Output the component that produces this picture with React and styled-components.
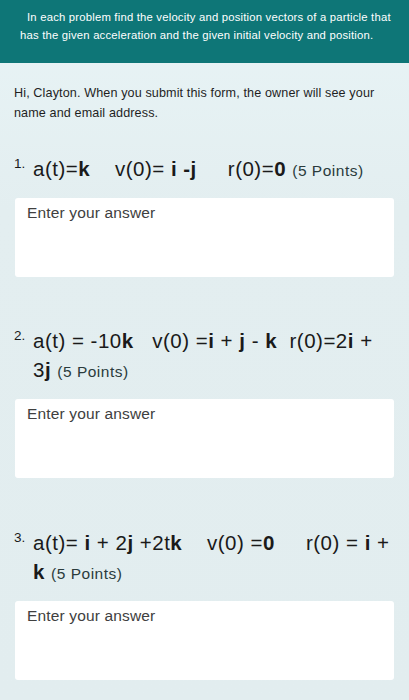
import styled, { createGlobalStyle } from 'styled-components'

const GlobalStyle = createGlobalStyle`
  html, body {
    margin: 0;
    padding: 0;
  }
  body {
    font-family: "Liberation Sans", Arial, sans-serif;
    background: #e3eef0;
  }
`

const Page = styled.div`
  width: 409px;
  min-height: 700px;
  overflow: hidden;
  background: linear-gradient(180deg, #e8f4f6 0%, #e3eef0 30%, #e2edef 100%);
`

const Banner = styled.header`
  background: #0e7677;
  color: #ffffff;
  font-size: 11.3px;
  letter-spacing: 0.2px;
  line-height: 18px;
  padding: 8px 8px 19px 20px;
  text-indent: 7px;
`

const Intro = styled.p`
  margin: 0;
  padding: 20px 10px 0 14px;
  font-size: 12.6px;
  letter-spacing: 0.12px;
  line-height: 20px;
  color: #1f1f1f;
`

const Question = styled.section`
  padding: 0 15px;
  margin-top: ${props => props.top || 38}px;
`

const Title = styled.div`
  display: flex;
  align-items: flex-start;
  color: #1a1a1a;
`

const Num = styled.span`
  flex: 0 0 19px;
  font-size: 13.5px;
  line-height: 18px;
  margin-top: 1px;
  margin-left: -1px;
`

const Prompt = styled.div`
  font-size: 20.5px;
  letter-spacing: 0.5px;
  line-height: 29px;

  b {
    font-weight: 700;
  }
`

const Points = styled.span`
  font-size: 15.5px;
  line-height: 1;
  letter-spacing: 0.5px;
  color: #2a3b3c;
`

const AnswerBox = styled.div`
  margin-top: 15px;
  height: 79px;
  background: #ffffff;
  border-radius: 3px;
  box-sizing: border-box;
  padding: 6px 12px;
  font-size: 15.5px;
  letter-spacing: 0.15px;
  line-height: 18px;
  color: #404040;
`

const questions = [
  {
    n: '1.',
    top: 31,
    body: (
      <>
        a(t)=<b>k</b>&nbsp;&nbsp;&nbsp; v(0)= <b>i -j</b>&nbsp;&nbsp;&nbsp;&nbsp; r(0)=<b>0</b>{' '}
        <Points>(5 Points)</Points>
      </>
    ),
  },
  {
    n: '2.',
    top: 49,
    body: (
      <>
        a(t) = -10<b>k</b>&nbsp;&nbsp; v(0) =<b>i</b> + <b>j</b> - <b>k</b>&nbsp; r(0)=2<b>i</b> + 3<b>j</b>{' '}
        <Points>(5 Points)</Points>
      </>
    ),
  },
  {
    n: '3.',
    top: 50,
    body: (
      <>
        a(t)= <b>i</b> + 2<b>j</b> +2t<b>k</b>&nbsp;&nbsp;&nbsp; v(0) =<b>0</b>&nbsp;&nbsp;&nbsp;&nbsp; r(0) = <b>i</b> + <b>k</b>{' '}
        <Points>(5 Points)</Points>
      </>
    ),
  },
]

export default function App() {
  return (
    <Page>
      <GlobalStyle />
      <Banner>
        In each problem find the velocity and position vectors of a particle that has the given
        acceleration and the given initial velocity and position.
      </Banner>
      <Intro>
        Hi, Clayton. When you submit this form, the owner will see your name and email address.
      </Intro>
      {questions.map(q => (
        <Question key={q.n} top={q.top}>
          <Title>
            <Num>{q.n}</Num>
            <Prompt>{q.body}</Prompt>
          </Title>
          <AnswerBox>Enter your answer</AnswerBox>
        </Question>
      ))}
    </Page>
  )
}
